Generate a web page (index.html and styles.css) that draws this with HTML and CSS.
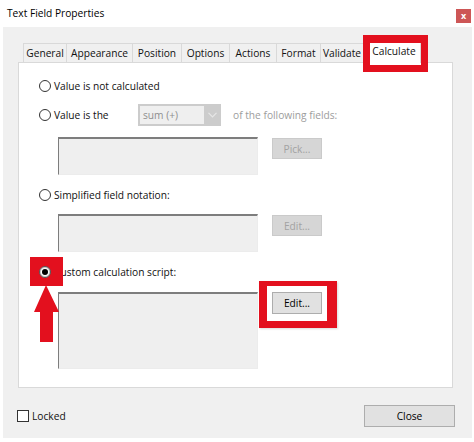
FILE: index.html
```html
<!DOCTYPE html>
<html>
<head>
<meta charset="utf-8">
<link rel="stylesheet" href="styles.css">
</head>
<body>
<div class="window">
  <div class="titlebar">
    <span class="title">Text Field Properties</span>
    <span class="close-x">x</span>
  </div>
  <div class="dialog">
    <div class="tabs">
      <div class="tab w-general">General</div>
      <div class="tab w-appearance">Appearance</div>
      <div class="tab w-position">Position</div>
      <div class="tab w-options">Options</div>
      <div class="tab w-actions">Actions</div>
      <div class="tab w-format">Format</div>
      <div class="tab w-validate">Validate</div>
      <div class="tab tab-active w-calculate">Calculate</div>
    </div>
    <div class="panel">
      <div class="opt">
        <span class="radio"></span>
        <span class="label">Value is not calculated</span>
      </div>
      <div class="opt opt-row2">
        <div class="opt-lead">
          <span class="radio"></span>
          <span class="label">Value is the</span>
        </div>
        <div class="select">
          <span class="select-text">sum (+)</span>
          <span class="select-arrow">
            <svg width="9" height="6" viewBox="0 0 9 6"><path d="M0.5 0.8 L4.5 4.8 L8.5 0.8" fill="none" stroke="#e6e6e6" stroke-width="1.2"/></svg>
          </span>
        </div>
        <span class="label label-disabled of-fields">of the following fields:</span>
      </div>
      <div class="fields fields-1">
        <div class="textbox tb-short"></div>
        <div class="btn btn-disabled">Pick...</div>
      </div>
      <div class="opt opt-gap">
        <span class="radio"></span>
        <span class="label">Simplified field notation:</span>
      </div>
      <div class="fields fields-2">
        <div class="textbox tb-short"></div>
        <div class="btn btn-disabled">Edit...</div>
      </div>
      <div class="opt opt-gap">
        <span class="radio radio-checked"></span>
        <span class="label">Custom calculation script:</span>
      </div>
      <div class="fields fields-3">
        <div class="textbox tb-tall"></div>
        <div class="btn btn-enabled">Edit...</div>
      </div>
    </div>
    <div class="footer">
      <div class="locked">
        <span class="checkbox"></span>
        <span class="label">Locked</span>
      </div>
      <div class="btn btn-enabled btn-close">Close</div>
    </div>
  </div>

  <div class="mark mark-tab"></div>
  <div class="mark mark-radio"></div>
  <svg class="mark-arrow" width="26" height="58" viewBox="0 0 26 58">
    <polygon points="12,0 25,27 19,27 19,57 6,57 6,27 0,27" fill="#e3101e"/>
  </svg>
  <div class="mark mark-edit"></div>
</div>
</body>
</html>
```
FILE: styles.css
```css
* { box-sizing: border-box; }

html, body {
  margin: 0;
  padding: 0;
  background: #ffffff;
}

body {
  font-family: "Open Sans", "Noto Sans", "Liberation Sans", sans-serif;
  font-size: 10.2px;
  color: #111111;
}

.window {
  position: relative;
  width: 474px;
  height: 442px;
  background: #ffffff;
}

.titlebar {
  height: 27px;
  display: flex;
  justify-content: space-between;
  align-items: flex-start;
}

.title {
  margin: 6px 0 0 7px;
  line-height: 14px;
  font-size: 10.2px;
  color: #000;
}

.close-x {
  margin: 9px 3px 0 0;
  width: 15px;
  height: 14px;
  background: #cd5656;
  color: #ffffff;
  font-size: 9px;
  font-weight: bold;
  line-height: 13px;
  text-align: center;
}

.dialog {
  margin: 0 2px 0 3px;
  height: 411px;
  background: #f0f0f0;
  padding: 14px 19px 0 15px;
}

/* Tabs */
.tabs {
  display: flex;
  align-items: flex-end;
  height: 21px;
  padding-left: 5px;
}

.tab {
  height: 19px;
  line-height: 18px;
  text-align: center;
  border: 1px solid #d9d9d9;
  border-bottom: none;
  border-right: none;
  background: #f0f0f0;
  color: #111;
  white-space: nowrap;
}

.w-general { width: 43px; }
.w-appearance { width: 66px; }
.w-position { width: 49px; }
.w-options { width: 48px; }
.w-actions { width: 47px; }
.w-format { width: 44px; }
.w-validate { width: 43px; }
.w-calculate { width: 58px; }

.tab-active {
  height: 22px;
  margin-bottom: -1px;
  background: #ffffff;
  position: relative;
  z-index: 1;
  line-height: 19px;
  border-right: 1px solid #d9d9d9;
  padding-left: 4px;
}

/* Panel */
.panel {
  height: 326px;
  background: #ffffff;
  border: 1px solid #d9d9d9;
  padding: 15px 0 0 20px;
}

.opt {
  display: flex;
  align-items: center;
  height: 16px;
}

.opt-row2 {
  margin-top: 10px;
  height: 22px;
}

.opt-gap {
  margin-top: 12px;
}

.opt-lead {
  display: flex;
  align-items: center;
  width: 99px;
}

.radio {
  width: 12px;
  height: 12px;
  border: 1px solid #333333;
  border-radius: 50%;
  background: #ffffff;
  margin-right: 3px;
  flex: none;
  position: relative;
  display: flex;
  align-items: center;
  justify-content: center;
}

.radio-checked {
  z-index: 3;
  border-color: #555;
  box-shadow: inset 0 0 0 1px #cfcfcf;
}

.radio-checked::after {
  content: "";
  width: 6px;
  height: 6px;
  border-radius: 50%;
  background: #000;
}

.label {
  white-space: nowrap;
  line-height: 16px;
}

.label-disabled {
  color: #9d9d9d;
}

.of-fields {
  margin-left: 12px;
}

.select {
  display: flex;
  width: 83px;
  height: 22px;
  background: #cccccc;
  padding: 2px 0 2px 2px;
}

.select-text {
  flex: 1;
  background: #efefef;
  color: #8e8e8e;
  padding-left: 3px;
  line-height: 18px;
}

.select-arrow {
  width: 17px;
  display: flex;
  align-items: center;
  justify-content: center;
}

.fields {
  display: flex;
  align-items: flex-start;
  margin-left: 19px;
}

.fields-1 { margin-top: 11px; }
.fields-2 { margin-top: 11px; }
.fields-3 { margin-top: 12px; }

.textbox {
  width: 200px;
  background: #efefef;
  border-top: 2px solid #7d7d7d;
  border-left: 1px solid #7d7d7d;
  border-right: 1px solid #ececec;
  border-bottom: 1px solid #ececec;
}

.tb-short { height: 38px; }
.tb-tall { height: 77px; }

.btn {
  margin-left: 14px;
  width: 50px;
  height: 22px;
  line-height: 20px;
  text-align: center;
  border: 1px solid #adadad;
  white-space: nowrap;
}

.btn-disabled {
  margin-top: 1px;
  height: 21px;
  background: #d6d6d6;
  border-color: #cacaca;
  color: #a2a2a2;
}

.btn-enabled {
  background: #e1e1e1;
  color: #000;
}

/* Footer */
.footer {
  display: flex;
  justify-content: space-between;
  align-items: flex-start;
  margin: 17px -2px 0 -1px;
}

.locked {
  display: flex;
  align-items: center;
  margin-top: 3px;
}

.checkbox {
  width: 12px;
  height: 12px;
  border: 1px solid #333;
  background: #fff;
  margin-right: 3px;
}

.btn-close {
  margin-left: 0;
  width: 91px;
  height: 22px;
}

/* Red annotations (overlays) */
.mark {
  position: absolute;
  z-index: 2;
}

.mark-tab {
  left: 363px;
  top: 35px;
  width: 65px;
  height: 37px;
  border: 7px solid #e3101e;
  border-top-width: 8px;
}

.mark-radio {
  left: 30px;
  top: 257px;
  width: 33px;
  height: 29px;
  background: #e3101e;
}

.mark-arrow {
  position: absolute;
  left: 34px;
  top: 285px;
  z-index: 2;
}

.mark-edit {
  left: 259px;
  top: 281px;
  width: 78px;
  height: 47px;
  border-style: solid;
  border-color: #e3101e;
  border-width: 5px 10px 7px 8px;
  box-shadow: 1px 1px 2px rgba(0,0,0,0.15);
}
```
